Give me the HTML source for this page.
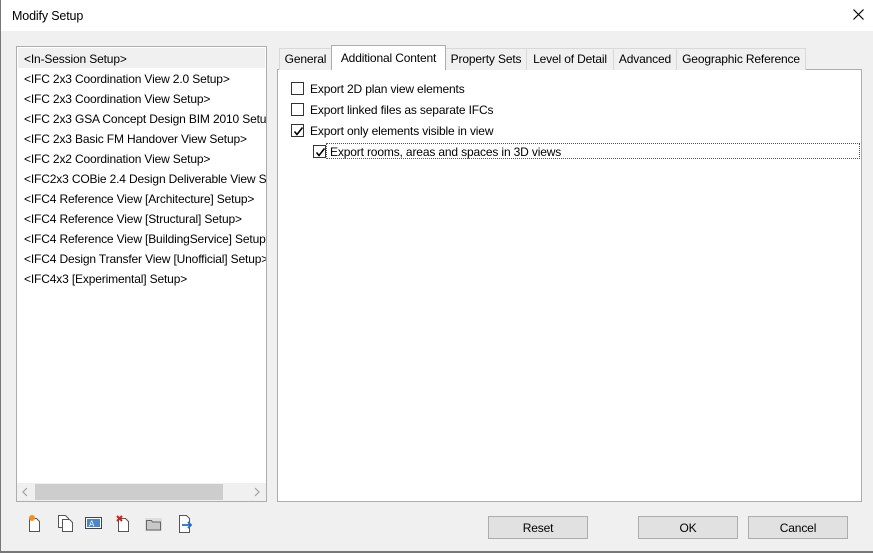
<!DOCTYPE html>
<html><head><style>
*{box-sizing:border-box}
body{margin:0;width:873px;height:553px;overflow:hidden;background:#f0f0f0;font-family:"Liberation Sans",sans-serif;font-size:12px;letter-spacing:-0.15px;color:#000;position:relative}
.abs{position:absolute}
#title{left:0;top:0;width:873px;height:31px;background:#fff}
#list{left:16px;top:46px;width:251px;height:456px;background:#fff;border:1px solid #adadad}
.it{position:absolute;left:7px;white-space:nowrap;width:242px;overflow:hidden}
.tab{position:absolute;top:48px;height:22px;border:1px solid #d9d9d9;border-bottom:none;background:#f0f0f0;text-align:center;line-height:21px}
#panel{left:277px;top:69px;width:585px;height:433px;background:#fff;border:1px solid #adadad}
.cb{position:absolute;width:13px;height:13px;border:1px solid #333;background:#fff}
.lbl{position:absolute;white-space:nowrap}
.btn{position:absolute;top:516px;width:100px;height:23px;border:1px solid #adadad;background:#e1e1e1;text-align:center;line-height:22px}
</style></head><body>
<div id="title" class="abs"><span class="abs" style="left:12px;top:9px;font-size:12.5px">Modify Setup</span>
<svg class="abs" style="left:853px;top:9px" width="11" height="11"><path d="M0.5 0.5L10.5 10.5M10.5 0.5L0.5 10.5" stroke="#000" stroke-width="1.2"/></svg></div>
<div class="abs" style="left:0;top:0;width:1px;height:553px;background:#777"></div>
<div class="abs" style="left:0;top:551px;width:873px;height:2px;background:#777"></div>
<div id="list" class="abs">
<div class="abs" style="left:1px;top:1px;width:247px;height:20px;background:#f0f0f0"></div>
<div class="it" style="top:5px">&lt;In-Session Setup&gt;</div>
<div class="it" style="top:25px">&lt;IFC 2x3 Coordination View 2.0 Setup&gt;</div>
<div class="it" style="top:45px">&lt;IFC 2x3 Coordination View Setup&gt;</div>
<div class="it" style="top:65px">&lt;IFC 2x3 GSA Concept Design BIM 2010 Setup&gt;</div>
<div class="it" style="top:85px">&lt;IFC 2x3 Basic FM Handover View Setup&gt;</div>
<div class="it" style="top:105px">&lt;IFC 2x2 Coordination View Setup&gt;</div>
<div class="it" style="top:125px">&lt;IFC2x3 COBie 2.4 Design Deliverable View Setup&gt;</div>
<div class="it" style="top:145px">&lt;IFC4 Reference View [Architecture] Setup&gt;</div>
<div class="it" style="top:165px">&lt;IFC4 Reference View [Structural] Setup&gt;</div>
<div class="it" style="top:185px">&lt;IFC4 Reference View [BuildingService] Setup&gt;</div>
<div class="it" style="top:205px">&lt;IFC4 Design Transfer View [Unofficial] Setup&gt;</div>
<div class="it" style="top:225px">&lt;IFC4x3 [Experimental] Setup&gt;</div>
<div class="abs" style="left:0;top:436px;width:249px;height:18px;background:#f0f0f0"></div>
<div class="abs" style="left:18px;top:437px;width:188px;height:16px;background:#cdcdcd"></div>
<svg class="abs" style="left:4px;top:440px" width="8" height="10"><path d="M6 1L2 5L6 9" stroke="#a0a0a0" fill="none" stroke-width="1.2"/></svg>
<svg class="abs" style="left:236px;top:440px" width="8" height="10"><path d="M2 1L6 5L2 9" stroke="#a0a0a0" fill="none" stroke-width="1.2"/></svg>
</div>
<div id="panel" class="abs">
<div class="cb" style="left:13px;top:12px"></div><div class="lbl" style="left:32px;top:12px">Export 2D plan view elements</div>
<div class="cb" style="left:13px;top:33px"></div><div class="lbl" style="left:32px;top:33px">Export linked files as separate IFCs</div>
<div class="cb" style="left:13px;top:54px"><svg class="abs" style="left:1px;top:1px" width="11" height="11"><path d="M1.5 5.5L4 8.5L9.5 1.5" stroke="#000" stroke-width="1.6" fill="none"/></svg></div><div class="lbl" style="left:32px;top:54px">Export only elements visible in view</div>
<div class="cb" style="left:35px;top:75px"><svg class="abs" style="left:1px;top:1px" width="11" height="11"><path d="M1.5 5.5L4 8.5L9.5 1.5" stroke="#000" stroke-width="1.6" fill="none"/></svg></div>
<div class="abs" style="left:48px;top:73px;width:534px;height:16px;border:1px dotted #555"></div>
<div class="lbl" style="left:52px;top:75px">Export rooms, areas and spaces in 3D views</div>
</div>
<div class="tab" style="left:279px;width:53px">General</div>
<div class="tab" style="left:331px;top:45px;height:25px;width:115px;background:#fff;border-color:#adadad;z-index:2;line-height:24px">Additional Content</div>
<div class="tab" style="left:445px;width:82px">Property Sets</div>
<div class="tab" style="left:526px;width:88px">Level of Detail</div>
<div class="tab" style="left:613px;width:64px">Advanced</div>
<div class="tab" style="left:676px;width:130px">Geographic Reference</div>
<svg class="abs" style="left:24px;top:512px" width="180" height="22">
<g fill="#fff" stroke="#555"><path d="M5.5 6.5h7l3 3v10h-10z"/><path d="M34.5 3.5h7l3 3v9h-10z"/><path d="M38.5 7.5h7l3 3v9h-10z"/><path d="M94.5 6.5h7l3 3v10h-10z"/><path d="M155.5 3.5h7l3 3v14h-10z"/></g>
<circle cx="8" cy="6" r="3" fill="#f39020"/>
<rect x="61.5" y="5.5" width="16" height="11" fill="#fff" stroke="#444"/><rect x="63" y="7" width="13" height="8" fill="#4a86c8"/><text x="65" y="14.5" font-size="8" fill="#fff" font-family="Liberation Sans">A</text>
<path d="M93 4l5 5M98 4l-5 5" stroke="#d02020" stroke-width="2"/>
<rect x="121" y="6" width="17" height="13" fill="#ddd"/><path d="M122.5 8.5h5l1 1.5h8v8h-14z" fill="#c8c8c8" stroke="#666"/>
<path d="M158 13h9M164 10l3 3-3 3" stroke="#1a6fd0" stroke-width="1.8" fill="none"/>
</svg>
<div class="btn" style="left:488px">Reset</div>
<div class="btn" style="left:638px">OK</div>
<div class="btn" style="left:748px">Cancel</div>
</body></html>
